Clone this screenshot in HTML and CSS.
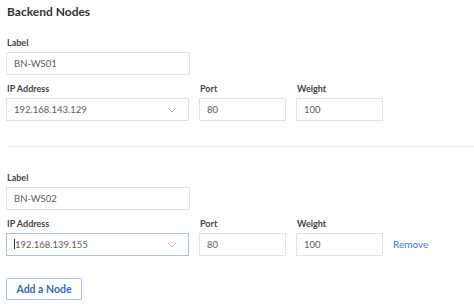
FILE: index.html
```html
<!DOCTYPE html>
<html>

<head>
    <meta charset="utf-8" />
    <title>Backend Nodes</title>
    <link rel="stylesheet" href="styles.css">
</head>

<body>
    <div class="nodes">
        <h2 class="nodes_title">Backend Nodes</h2>

        <div class="node">
            <div class="field">
                <label class="field_label">Label</label>
                <div class="input wide">BN-WS01</div>
            </div>
            <div class="row">
                <div class="field">
                    <label class="field_label">IP Address</label>
                    <div class="input select">
                        <span>192.168.143.129</span>
                        <svg class="chevron" width="10" height="6" viewBox="0 0 10 6"><polyline points="1,1 5,5 9,1" fill="none" stroke="#bcbcbc" stroke-width="1"/></svg>
                    </div>
                </div>
                <div class="field">
                    <label class="field_label">Port</label>
                    <div class="input small">80</div>
                </div>
                <div class="field">
                    <label class="field_label">Weight</label>
                    <div class="input small">100</div>
                </div>
            </div>
        </div>

        <hr class="divider">

        <div class="node node_last">
            <div class="field">
                <label class="field_label">Label</label>
                <div class="input wide">BN-WS02</div>
            </div>
            <div class="row">
                <div class="field">
                    <label class="field_label">IP Address</label>
                    <div class="input select focus">
                        <span><i class="caret"></i>192.168.139.155</span>
                        <svg class="chevron" width="10" height="6" viewBox="0 0 10 6"><polyline points="1,1 5,5 9,1" fill="none" stroke="#bcbcbc" stroke-width="1"/></svg>
                    </div>
                </div>
                <div class="field">
                    <label class="field_label">Port</label>
                    <div class="input small">80</div>
                </div>
                <div class="field">
                    <label class="field_label">Weight</label>
                    <div class="input small">100</div>
                </div>
                <a class="remove" href="#">Remove</a>
            </div>
        </div>

        <button class="add_node">Add a Node</button>
    </div>
</body>

</html>
```

FILE: styles.css
```css
* {
    margin: 0;
    padding: 0;
    box-sizing: border-box;
}

body {
    background: #fff;
    color: #333;
    font-family: 'Lato', 'Arial', sans-serif;
}

/* page */

.nodes {
    padding: 4px 0 0 6px;
}

.nodes_title {
    font-size: 12px;
    font-weight: 700;
    line-height: 15px;
    color: #333;
    padding-left: 1px;
    margin-bottom: 18px;
}

.divider {
    border: 0;
    border-top: 1px solid #ececec;
    margin-left: 1px;
}

/* a node */

.node {
    display: flex;
    flex-direction: column;
    gap: 8px;
    padding: 25px 0;
}

.node:first-of-type {
    padding-top: 0;
}

.node_last {
    padding-bottom: 21px;
}

.row {
    display: flex;
    align-items: flex-end;
    gap: 10px;
}

.field {
    display: flex;
    flex-direction: column;
}

.field_label {
    font-size: 9px;
    font-weight: 700;
    line-height: 12px;
    color: #444;
    padding-left: 1px;
    margin-bottom: 3px;
}

/* inputs */

.input {
    display: flex;
    align-items: center;
    height: 23px;
    padding: 0 7px;
    border: 1px solid #e2e2e2;
    background: #fff;
    font-size: 9.5px;
    color: #5c5c5c;
}

.wide {
    width: 184px;
}

.select {
    width: 183px;
    justify-content: space-between;
}

.select .chevron {
    margin-right: 4px;
}

.focus {
    border-color: #a7c2e6;
}

.caret {
    display: inline-block;
    width: 1px;
    height: 10px;
    background: #333;
    vertical-align: -1px;
}

.small {
    width: 87px;
}

.remove {
    height: 23px;
    line-height: 23px;
    font-size: 10px;
    color: #4a76c4;
    text-decoration: none;
}

.add_node {
    height: 22px;
    width: 76px;
    border: 1px solid #a9c3e8;
    background: #fff;
    border-radius: 1px;
    font-family: 'Lato', 'Arial', sans-serif;
    font-size: 10.5px;
    font-weight: 700;
    color: #3a67b3;
}
```
